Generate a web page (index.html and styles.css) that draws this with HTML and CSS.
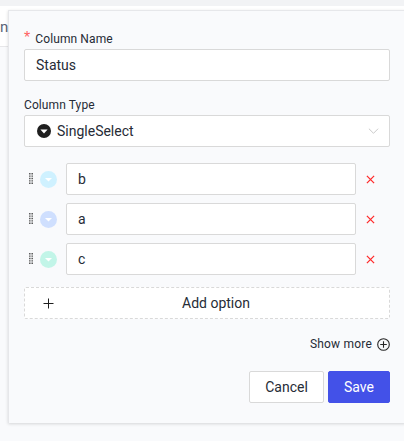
FILE: index.html
```html
<!DOCTYPE html>
<html lang="en">
<head>
    <meta charset="UTF-8">
    <title>Edit Column</title>
    <link rel="stylesheet" href="styles.css">
</head>
<body>
    <div class="topbar"></div>
    <div class="tab"><span>n</span></div>

    <div class="panel">
        <div class="field field-name">
            <label class="field-label"><span class="required">*</span>Column Name</label>
            <div class="box">Status</div>
        </div>

        <div class="field field-type">
            <label class="field-label">Column Type</label>
            <div class="box box-select">
                <svg class="type-icon" viewBox="0 0 14 14">
                    <circle cx="7" cy="7" r="7" fill="#1f1f1f"/>
                    <path d="M3.4 5.6h7.2L7 9.4z" fill="#fff"/>
                </svg>
                <span>SingleSelect</span>
                <svg class="chevron" viewBox="0 0 12 8">
                    <path d="M1 1.5l5 5 5-5" fill="none" stroke="#c4c4c4" stroke-width="1"/>
                </svg>
            </div>
        </div>

        <div class="options">
            <div class="option">
                <svg class="handle" viewBox="0 0 4 12">
                    <path d="M.8 0v12M3.2 0v12" stroke="#555" stroke-width="1.5" stroke-dasharray="1.4 1"/>
                </svg>
                <svg class="option-dot" viewBox="0 0 17 17">
                    <circle cx="8.5" cy="8.5" r="8.5" fill="#cff1ff"/>
                    <path d="M5 7h7l-3.5 3.6z" fill="#fff"/>
                </svg>
                <div class="box">b</div>
                <svg class="remove" viewBox="0 0 10 10">
                    <path d="M1 1l8 8M9 1l-8 8" stroke="#ff2a2a" stroke-width="1.4"/>
                </svg>
            </div>
            <div class="option">
                <svg class="handle" viewBox="0 0 4 12">
                    <path d="M.8 0v12M3.2 0v12" stroke="#555" stroke-width="1.5" stroke-dasharray="1.4 1"/>
                </svg>
                <svg class="option-dot" viewBox="0 0 17 17">
                    <circle cx="8.5" cy="8.5" r="8.5" fill="#cfdffe"/>
                    <path d="M5 7h7l-3.5 3.6z" fill="#fff"/>
                </svg>
                <div class="box">a</div>
                <svg class="remove" viewBox="0 0 10 10">
                    <path d="M1 1l8 8M9 1l-8 8" stroke="#ff2a2a" stroke-width="1.4"/>
                </svg>
            </div>
            <div class="option">
                <svg class="handle" viewBox="0 0 4 12">
                    <path d="M.8 0v12M3.2 0v12" stroke="#555" stroke-width="1.5" stroke-dasharray="1.4 1"/>
                </svg>
                <svg class="option-dot" viewBox="0 0 17 17">
                    <circle cx="8.5" cy="8.5" r="8.5" fill="#c2f5e8"/>
                    <path d="M5 7h7l-3.5 3.6z" fill="#fff"/>
                </svg>
                <div class="box">c</div>
                <svg class="remove" viewBox="0 0 10 10">
                    <path d="M1 1l8 8M9 1l-8 8" stroke="#ff2a2a" stroke-width="1.4"/>
                </svg>
            </div>
        </div>

        <div class="add-option">
            <svg class="plus" viewBox="0 0 11 11">
                <path d="M5.5 0.5v10M0.5 5.5h10" stroke="#1f1f1f" stroke-width="1"/>
            </svg>
            <span class="add-label">Add option</span>
        </div>

        <div class="show-more">
            <span>Show more</span>
            <svg class="more-icon" viewBox="0 0 13 13">
                <circle cx="6.5" cy="6.5" r="5.8" fill="none" stroke="#262626" stroke-width="1.1"/>
                <path d="M6.5 3.2v6.6M3.2 6.5h6.6" stroke="#262626" stroke-width="1.1"/>
            </svg>
        </div>

        <div class="actions">
            <button class="btn btn-cancel">Cancel</button>
            <button class="btn btn-save">Save</button>
        </div>
    </div>
</body>
</html>
```

FILE: styles.css
```css
html, body {
    margin: 0;
    padding: 0;
    height: 441px;
    overflow: hidden;
}
body {
    position: relative;
    font-family: Roboto, 'Liberation Sans', sans-serif;
    font-size: 14px;
    color: #262b36;
    background-color: #f9fafc;
}
.topbar {
    height: 6px;
    background-color: #f2f3f5;
}
.tab {
    height: 40px;
    background-color: #fff;
    border-bottom: 1px solid #e7e7e9;
    line-height: 42px;
    font-size: 15px;
    color: #5a6478;
    overflow: hidden;
}
.panel {
    position: absolute;
    top: 10px;
    left: 8px;
    box-sizing: border-box;
    width: 398px;
    height: 413px;
    padding: 17px 16px 0 15px;
    background-color: #f9fafc;
    border-top: 1px solid #e6e7ea;
    border-left: 1px solid #e6e7ea;
    box-shadow: 0 1px 3px rgba(0,0,0,0.15);
}
.field-label {
    display: block;
    height: 21px;
    font-size: 12px;
    line-height: 21px;
    letter-spacing: 0.1px;
}
.field-name .field-label {
    height: 20px;
    padding-top: 1px;
}
.required {
    margin-right: 5px;
    color: #ff5f5f;
    font-family: 'Liberation Sans', sans-serif;
    font-size: 16px;
    line-height: 1;
}
.field-type {
    margin-top: 14px;
}
.field-type .field-label {
    height: 20px;
}
.box {
    box-sizing: border-box;
    display: flex;
    align-items: center;
    height: 32px;
    padding: 0 11px;
    background-color: #fff;
    border: 1px solid #d9d9d9;
    border-radius: 2px;
    font-size: 14px;
}
.box-select {
    padding-left: 12px;
}
.type-icon {
    width: 14px;
    height: 14px;
    margin-right: 6px;
}
.chevron {
    width: 11px;
    height: 8px;
    margin-left: auto;
    margin-right: -1px;
}
.options {
    display: flex;
    flex-direction: column;
    gap: 8px;
    margin-top: 16px;
}
.option {
    display: flex;
    align-items: center;
}
.option .box {
    width: 290px;
}
.handle {
    width: 4px;
    height: 12px;
    margin: 0 7px 0 5px;
}
.option-dot {
    width: 17px;
    height: 17px;
    margin-right: 9px;
}
.remove {
    width: 9px;
    height: 9px;
    margin-left: 10px;
}
.add-option {
    box-sizing: border-box;
    display: flex;
    align-items: center;
    height: 32px;
    margin-top: 12px;
    padding: 0 11px 0 18px;
    background-color: #fff;
    border: 1px dashed #d9d9d9;
    border-radius: 2px;
}
.plus {
    width: 11px;
    height: 11px;
}
.add-label {
    flex: 1;
    text-align: center;
}
.show-more {
    display: flex;
    align-items: center;
    justify-content: flex-end;
    gap: 5px;
    margin-top: 17px;
    font-size: 12px;
    line-height: 16px;
    letter-spacing: 0.2px;
}
.more-icon {
    width: 13px;
    height: 13px;
}
.actions {
    display: flex;
    justify-content: flex-end;
    gap: 4px;
    margin-top: 19px;
}
.btn {
    box-sizing: border-box;
    height: 32px;
    border: 1px solid #d9d9d9;
    border-radius: 2px;
    background-color: #fff;
    color: #262b36;
    font-family: inherit;
    font-size: 14px;
}
.btn-cancel {
    width: 75px;
}
.btn-save {
    width: 62px;
    background-color: #4351e8;
    border-color: #4351e8;
    color: #fff;
}
```
